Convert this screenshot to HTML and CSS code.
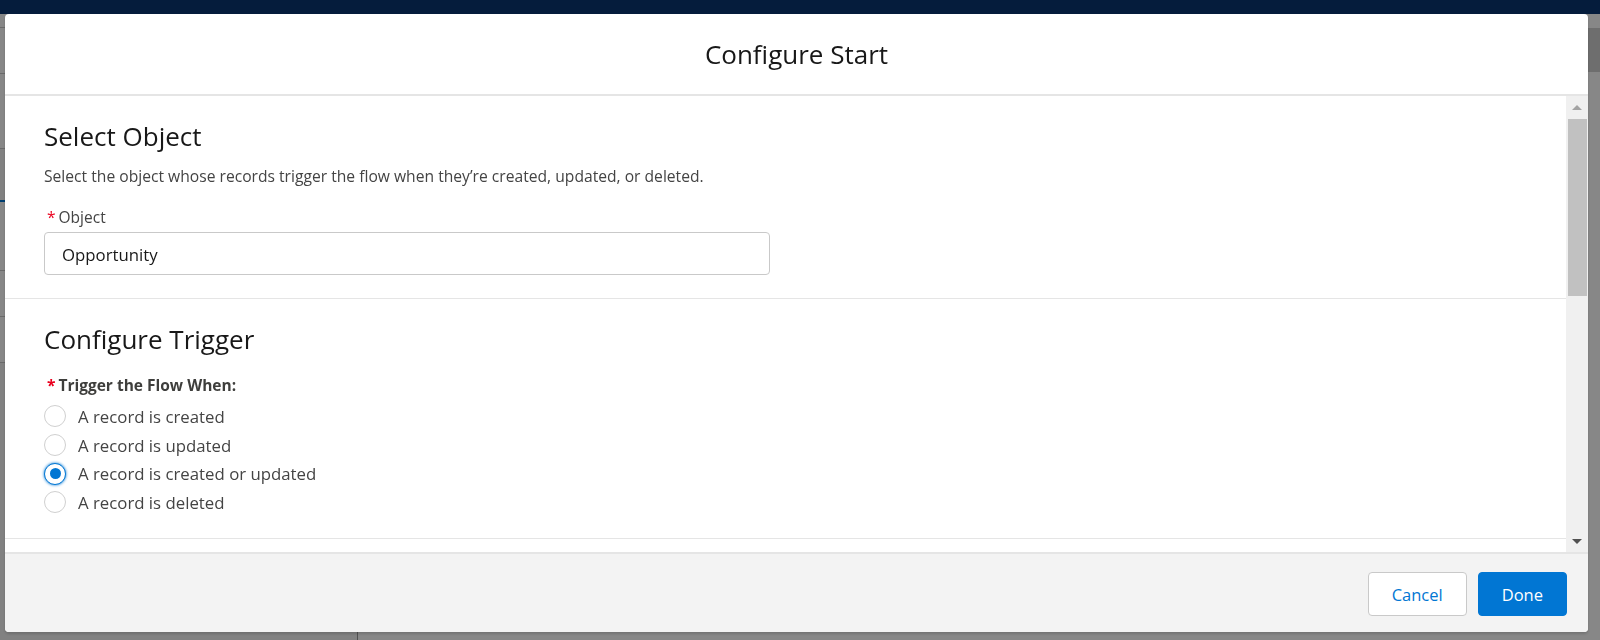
FILE: index.html
```html
<!DOCTYPE html>
<html lang="en">
<head>
    <meta charset="UTF-8">
    <meta name="viewport" content="width=device-width, initial-scale=1.0">
    <title>Configure Start</title>
    <link rel="stylesheet" href="styles.css">
</head>
<body>
    <!-- flow builder page sitting behind the dialog -->
    <div class="app">
        <div class="app-header"></div>
        <div class="app-body">
            <div class="side-panel">
                <div class="side-row side-row-sm"></div>
                <div class="side-row side-row-md"></div>
                <div class="side-row side-row-lg"></div>
                <div class="side-row side-row-tabs"><div class="tab-line"></div></div>
                <div class="side-row side-row-md"></div>
                <div class="side-row side-row-md"></div>
            </div>
            <div class="canvas">
                <div class="toolbar"></div>
            </div>
        </div>
    </div>
    <div class="backdrop"></div>

    <div class="modal">
        <header class="modal-header">
            <h1>Configure Start</h1>
        </header>

        <div class="modal-body">
            <div class="modal-scroll">
                <section class="section">
                    <h2>Select Object</h2>
                    <p class="section-desc">Select the object whose records trigger the flow when they’re created, updated, or deleted.</p>
                    <label class="field-label"><abbr class="required">*</abbr>Object</label>
                    <div class="input">Opportunity</div>
                </section>

                <section class="section section-trigger">
                    <h2>Configure Trigger</h2>
                    <div class="legend"><abbr class="required">*</abbr>Trigger the Flow When:</div>
                    <div class="radio-group">
                        <label class="radio"><span class="radio-faux"></span>A record is created</label>
                        <label class="radio"><span class="radio-faux"></span>A record is updated</label>
                        <label class="radio checked"><span class="radio-faux"></span>A record is created or updated</label>
                        <label class="radio"><span class="radio-faux"></span>A record is deleted</label>
                    </div>
                </section>
            </div>

            <div class="scrollbar">
                <span class="scroll-btn up"></span>
                <div class="scroll-thumb"></div>
                <div class="scroll-track"></div>
                <span class="scroll-btn down"></span>
            </div>
        </div>

        <footer class="modal-footer">
            <button class="btn btn-neutral">Cancel</button>
            <button class="btn btn-brand">Done</button>
        </footer>
    </div>
</body>
</html>
```

FILE: styles.css
```css
* {
    margin: 0;
    padding: 0;
    box-sizing: border-box;
}

body {
    font-family: "Open Sans", "Liberation Sans", sans-serif;
    background: #ffffff;
    color: #181818;
    width: 1600px;
    height: 640px;
    overflow: hidden;
}

/* page behind */
.app-header {
    height: 14px;
    background: #0b3571;
}

.app-body {
    display: flex;
    height: 626px;
}

.side-panel {
    width: 358px;
    background: #f3f3f3;
    border-right: 1px solid #9a9a9a;
}

.side-row {
    border-bottom: 1px solid #c9c9c9;
    background: #ffffff;
}

.side-row-sm { height: 14px; }
.side-row-md { height: 46px; }
.side-row-lg { height: 75px; }
.side-row-tabs { height: 71px; }

.tab-line {
    margin-top: 51px;
    width: 60px;
    height: 2px;
    background: #0176d3;
}

.canvas {
    flex: 1;
    background: #ffffff;
}

.toolbar {
    margin-top: 14px;
    height: 44px;
    background: #d0d0d0;
}

.backdrop {
    position: fixed;
    top: 0;
    left: 0;
    right: 0;
    bottom: 0;
    background: rgba(0, 0, 0, 0.47);
}

/* dialog */
.modal {
    position: fixed;
    left: 5px;
    top: 14px;
    width: 1583px;
    height: 618px;
    background: #ffffff;
    border-radius: 4px;
    overflow: hidden;
    display: flex;
    flex-direction: column;
    box-shadow: 0 2px 3px rgba(0, 0, 0, 0.16);
}

.modal-header {
    height: 82px;
    border-bottom: 2px solid #e5e5e5;
    display: flex;
    align-items: center;
    justify-content: center;
}

.modal-header h1 {
    font-size: 26px;
    font-weight: 400;
    line-height: 32px;
    color: #181818;
}

.modal-body {
    display: flex;
    height: 456px;
}

.modal-scroll {
    flex: 1;
    overflow: hidden;
}

.section {
    padding: 24px 39px 23px;
    border-bottom: 1px solid #e5e5e5;
}

.section-trigger {
    padding-bottom: 21px;
}

.section h2 {
    font-size: 26px;
    font-weight: 400;
    line-height: 32px;
    color: #181818;
}

.section-desc {
    margin-top: 12px;
    font-size: 15.65px;
    line-height: 24px;
    color: #444444;
}

.field-label {
    display: block;
    margin-top: 18px;
    font-size: 15.5px;
    line-height: 22px;
    color: #444444;
}

.required {
    color: #ea001e;
    text-decoration: none;
    margin: 0 3px 0 3px;
}

.input {
    margin-top: 4px;
    width: 726px;
    height: 43px;
    border: 1px solid #c9c9c9;
    border-radius: 4px;
    padding: 2px 17px 0;
    font-size: 16.8px;
    line-height: 39px;
    color: #181818;
}

.legend {
    margin-top: 19px;
    font-size: 15.5px;
    font-weight: 700;
    line-height: 22px;
    color: #3e3e3c;
}

.radio-group {
    margin-top: 6px;
}

.radio {
    display: flex;
    align-items: center;
    height: 28.7px;
    font-size: 16.8px;
    color: #444444;
}

.radio-faux {
    width: 22px;
    height: 22px;
    flex-shrink: 0;
    margin-right: 12px;
    border: 1px solid #d0d0d0;
    border-radius: 50%;
    background: #ffffff;
    display: flex;
    align-items: center;
    justify-content: center;
}

.radio.checked .radio-faux {
    border-color: #0176d3;
    box-shadow: 0 0 3px #0176d3;
}

.radio.checked .radio-faux::after {
    content: "";
    width: 11px;
    height: 11px;
    border-radius: 50%;
    background: #0176d3;
}

/* fake classic scrollbar */
.scrollbar {
    width: 22px;
    background: #f0f0f0;
    display: flex;
    flex-direction: column;
}

.scroll-btn {
    height: 22px;
    display: flex;
    align-items: center;
    justify-content: center;
}

.scroll-btn.up::before {
    content: "";
    border-left: 5px solid transparent;
    border-right: 5px solid transparent;
    border-bottom: 5px solid #a3a3a3;
}

.scroll-btn.down::before {
    content: "";
    border-left: 5px solid transparent;
    border-right: 5px solid transparent;
    border-top: 5px solid #505050;
}

.scroll-thumb {
    margin: 1px 1px 0 2px;
    height: 177px;
    background: #c1c1c1;
}

.scroll-track {
    flex: 1;
}

.modal-footer {
    flex: 1;
    background: #f3f3f3;
    border-top: 2px solid #e5e5e5;
    display: flex;
    justify-content: flex-end;
    align-items: flex-start;
    gap: 11px;
    padding: 18px 21px 0;
}

.btn {
    height: 44px;
    padding: 0 23px;
    border: 1px solid;
    border-radius: 4px;
    font-family: inherit;
    font-size: 16.5px;
    cursor: pointer;
}

.btn-neutral {
    background: #ffffff;
    border-color: #c9c9c9;
    color: #0176d3;
}

.btn-brand {
    background: #0176d3;
    border-color: #0176d3;
    color: #ffffff;
}
```
